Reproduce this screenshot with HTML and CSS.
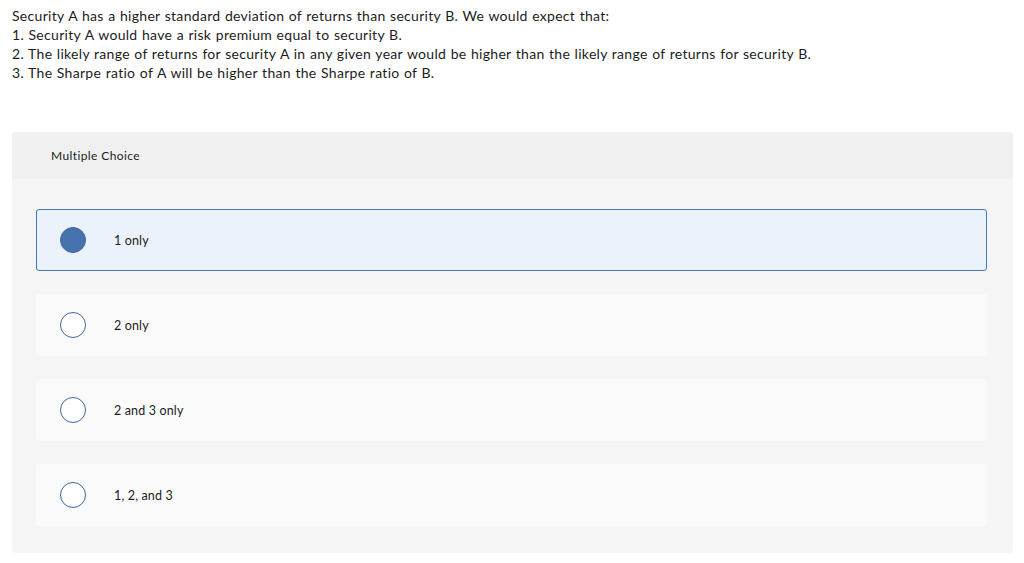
FILE: index.html
```html
<!DOCTYPE html>
<html lang="en">
<head>
<meta charset="utf-8">
<title>Multiple Choice</title>
<link rel="stylesheet" href="styles.css">
</head>
<body>
<div class="question">
  <p>Security A has a higher standard deviation of returns than security B. We would expect that:</p>
  <p>1. Security A would have a risk premium equal to security B.</p>
  <p>2. The likely range of returns for security A in any given year would be higher than the likely range of returns for security B.</p>
  <p>3. The Sharpe ratio of A will be higher than the Sharpe ratio of B.</p>
</div>
<section class="panel">
  <div class="panel-head">Multiple Choice</div>
  <div class="panel-body">
    <div class="option selected"><span class="radio"></span><span class="label">1 only</span></div>
    <div class="option"><span class="radio"></span><span class="label">2 only</span></div>
    <div class="option"><span class="radio"></span><span class="label">2 and 3 only</span></div>
    <div class="option"><span class="radio"></span><span class="label">1, 2, and 3</span></div>
  </div>
</section>
</body>
</html>
```
FILE: styles.css
```css
html, body {
  margin: 0;
  padding: 0;
  background: #ffffff;
}
body {
  padding: 6px 11px 0 12px;
  font-family: "Lato", "Open Sans", sans-serif;
  color: #1c1c1c;
}
.question p {
  margin: 0;
  font-size: 14px;
  line-height: 19px;
  letter-spacing: 0.3px;
  word-spacing: 0.6px;
}
.panel {
  margin-top: 50px;
  background: #f5f5f5;
  border-radius: 4px;
}
.panel-head {
  height: 47px;
  display: flex;
  align-items: center;
  padding-left: 39px;
  background: #f0f0f0;
  border-radius: 4px 4px 0 0;
  font-size: 12px;
  letter-spacing: 0.4px;
}
.panel-body {
  padding: 30px 26px 27px 24px;
  display: flex;
  flex-direction: column;
  gap: 23px;
}
.option {
  height: 62px;
  box-sizing: border-box;
  display: flex;
  align-items: center;
  padding-left: 23px;
  background: #fafafa;
  border: 1px solid transparent;
  border-radius: 3px;
  font-size: 12.5px;
  letter-spacing: 0.15px;
}
.option.selected {
  background: #ebf2fb;
  border-color: #4a78b6;
}
.radio {
  width: 26px;
  height: 26px;
  box-sizing: border-box;
  border: 1.3px solid #3d67a3;
  border-radius: 50%;
  background: #ffffff;
  margin-right: 28px;
  flex: none;
}
.option.selected .radio {
  background: #4672b0;
  border-color: #3d67a3;
}
```
